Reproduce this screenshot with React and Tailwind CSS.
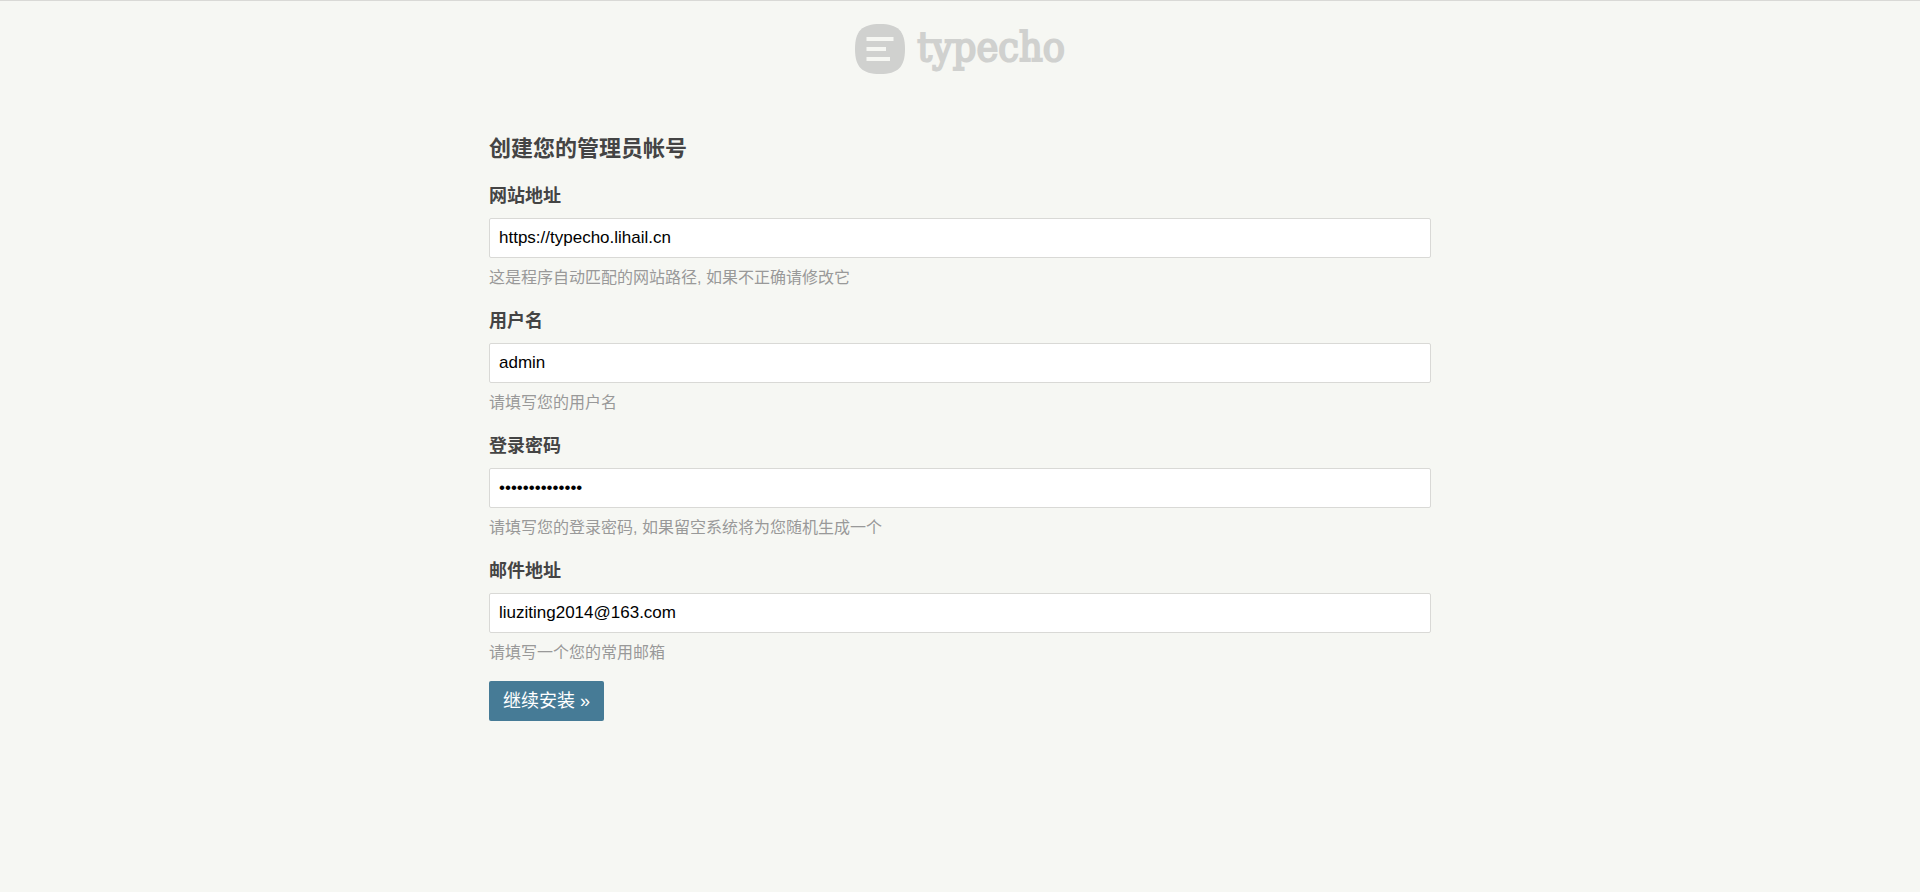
import { useState } from "react";

const fields = [
  {
    name: "userUrl",
    type: "text",
    label: "网站地址",
    hint: "这是程序自动匹配的网站路径, 如果不正确请修改它",
  },
  {
    name: "userName",
    type: "text",
    label: "用户名",
    hint: "请填写您的用户名",
  },
  {
    name: "userPassword",
    type: "password",
    label: "登录密码",
    hint: "请填写您的登录密码, 如果留空系统将为您随机生成一个",
  },
  {
    name: "userMail",
    type: "text",
    label: "邮件地址",
    hint: "请填写一个您的常用邮箱",
  },
];

function Logo() {
  return (
    <div className="flex h-[50px] items-center justify-center gap-3 text-[#d0d1cf]">
      <svg className="size-[50px]" viewBox="0 0 50 50" aria-hidden="true">
        <path
          fill="currentColor"
          d="M25 0C43 0 50 7 50 25S43 50 25 50 0 43 0 25 7 0 25 0Z"
        />
        <path
          fill="#f6f7f3"
          d="M11.5 13h27v4h-27zM11.5 23H31v4H11.5zM11.5 33H35v4H11.5z"
        />
      </svg>
      <span className="pb-1 font-['DejaVu_Serif_Condensed','DejaVu_Serif',serif] text-[41px] leading-[50px] [-webkit-text-stroke:2px_currentColor]">
        typecho
      </span>
    </div>
  );
}

export default function App() {
  const [form, setForm] = useState({
    userUrl: "https://typecho.lihail.cn",
    userName: "admin",
    userPassword: "typecho-secret",
    userMail: "liuziting2014@163.com",
  });

  const handleChange = (e) => {
    setForm({ ...form, [e.target.name]: e.target.value });
  };

  const handleSubmit = (e) => {
    e.preventDefault();
  };

  return (
    <div className="min-h-screen border-t border-[#d9d9d6] bg-[#f6f7f3] pt-[23px] font-['Liberation_Sans','Noto_Sans_CJK_SC',sans-serif] text-[#444]">
      <Logo />
      <main className="mx-auto mt-[59px] max-w-[942px]">
        <h1 className="mb-[19px] text-[22px] leading-8 font-bold">
          创建您的管理员帐号
        </h1>
        <form onSubmit={handleSubmit}>
          <div className="space-y-[19px]">
            {fields.map((field) => (
              <div key={field.name}>
                <label
                  htmlFor={field.name}
                  className="mb-[10px] block text-[18px] leading-6 font-bold"
                >
                  {field.label}
                </label>
                <input
                  id={field.name}
                  type={field.type}
                  name={field.name}
                  value={form[field.name]}
                  onChange={handleChange}
                  className="block h-10 w-full rounded-xs border border-[#d9d9d6] bg-white px-[9px] text-[17px] text-black"
                />
                <p className="mt-2 text-[16px] leading-6 text-[#999]">
                  {field.hint}
                </p>
              </div>
            ))}
          </div>
          <button
            type="submit"
            className="mt-4 h-10 rounded-xs bg-[#467b96] px-[14px] text-[18px] text-white"
          >
            继续安装 »
          </button>
        </form>
      </main>
    </div>
  );
}
